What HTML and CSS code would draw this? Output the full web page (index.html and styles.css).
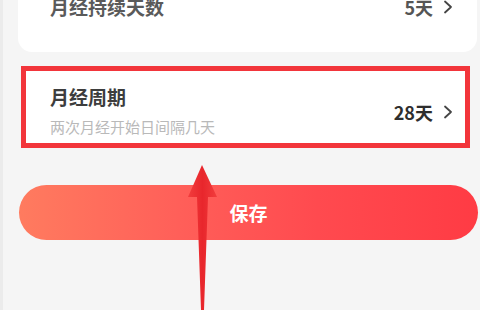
FILE: index.html
```html
<!DOCTYPE html>
<html lang="zh-CN">
<head>
<meta charset="utf-8">
<link rel="stylesheet" href="styles.css">
</head>
<body>
<div class="page">
  <div class="card card-top">
    <div class="row">
      <span class="label label-gray">月经持续天数</span>
      <span class="value value-gray">5天<svg class="chev" viewBox="0 0 10 14" width="10" height="14"><path d="M2 1.5 L8 7 L2 12.5" fill="none" stroke="currentColor" stroke-width="1.8" stroke-linecap="round" stroke-linejoin="round"/></svg></span>
    </div>
  </div>
  <div class="card card-hl">
    <div class="row row-two">
      <div class="texts">
        <div class="label">月经周期</div>
        <div class="sub">两次月经开始日间隔几天</div>
      </div>
      <span class="value">28天<svg class="chev" viewBox="0 0 10 14" width="10" height="14"><path d="M2 1.5 L8 7 L2 12.5" fill="none" stroke="currentColor" stroke-width="1.8" stroke-linecap="round" stroke-linejoin="round"/></svg></span>
    </div>
  </div>
  <button class="save">保存</button>
  <svg class="arrow" viewBox="0 0 40 150" width="40" height="150">
    <defs>
      <linearGradient id="ag" x1="0" y1="0" x2="1" y2="0">
        <stop offset="0" stop-color="#f23d3d"/>
        <stop offset="0.5" stop-color="#e8262c"/>
        <stop offset="1" stop-color="#f23d3d"/>
      </linearGradient>
    </defs>
    <polygon points="17,5 3,37 12,37 16,150 19,150 23,37 32,37" fill="url(#ag)"/>
  </svg>
</div>
</body>
</html>
```
FILE: styles.css
```css
html, body {
  margin: 0;
  padding: 0;
}
body {
  background: #f5f5f5;
  font-family: "Noto Sans CJK SC", "Noto Sans", sans-serif;
  overflow: hidden;
  width: 480px;
  height: 310px;
}
.page {
  position: relative;
  height: 310px;
  border-left: 3px solid #ebebeb;
  box-sizing: border-box;
  display: flex;
  flex-direction: column;
}
.card {
  background: #fff;
}
.card-top {
  margin: -24px 3px 0 15px;
  padding: 0 24px 14px 32px;
  border-radius: 14px;
}
.card-top .row {
  height: 62px;
}
.row {
  display: flex;
  align-items: center;
  justify-content: space-between;
}
.label {
  font-size: 19px;
  font-weight: 700;
  color: #3d3d3d;
  line-height: 22px;
}
.label-gray {
  color: #5a5a5a;
}
.value {
  display: flex;
  align-items: center;
  font-size: 18px;
  font-weight: 700;
  color: #2e2e2e;
}
.value-gray {
  color: #555;
  font-weight: 600;
}
.chev {
  margin-left: 10px;
  color: #444;
}
.card-hl {
  margin: 14px 10px 0 18px;
  border: 5px solid #f2353b;
  padding: 15px 12px 7px 24px;
}
.sub {
  margin-top: 10px;
  font-size: 15px;
  line-height: 18px;
  color: #b9b9b9;
}
.row-two .value {
  margin-top: 2px;
}
.save {
  margin: 37px 2px 0 16px;
  height: 55px;
  border: none;
  border-radius: 28px;
  background: linear-gradient(90deg, #ff7b5f 0%, #ff5f59 35%, #ff4a4f 65%, #ff3b44 100%);
  color: #fff;
  font-family: "Noto Sans CJK SC", "Noto Sans", sans-serif;
  font-size: 19px;
  font-weight: 700;
  padding: 0;
}
.arrow {
  position: absolute;
  left: 182px;
  top: 160px;
}
```
